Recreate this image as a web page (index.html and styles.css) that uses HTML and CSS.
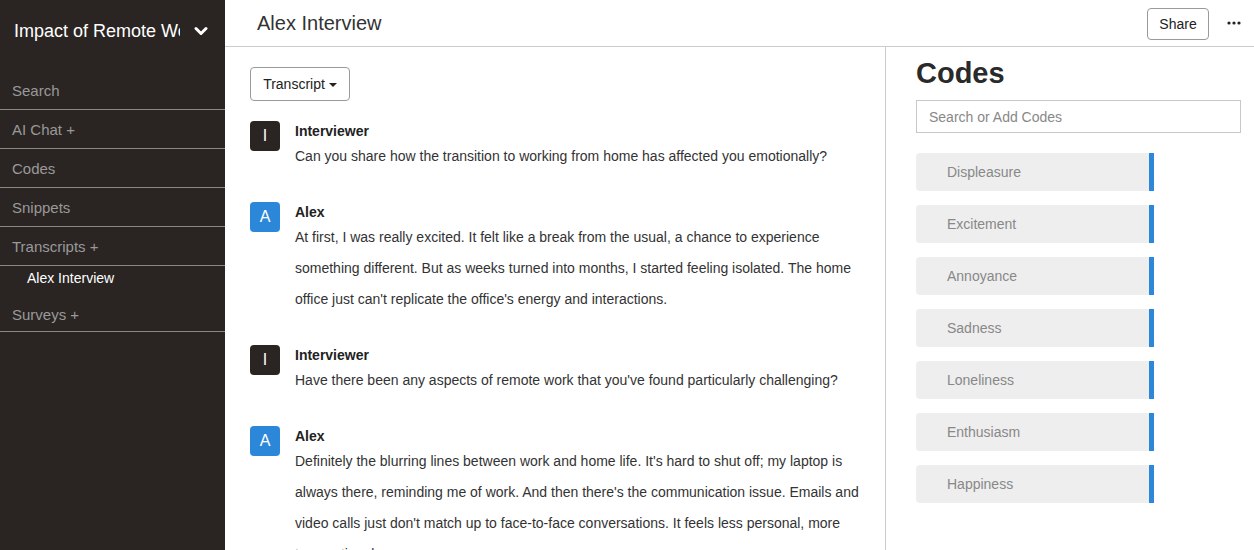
FILE: index.html
```html
<!DOCTYPE html>
<html>
<head>
<meta charset="utf-8">
<link rel="stylesheet" href="styles.css">
</head>
<body>
<div class="app">
  <aside class="sidebar">
    <div class="project">
      <span class="project-name">Impact of Remote Work</span>
      <svg class="chev" width="14" height="10" viewBox="0 0 14 10"><polyline points="2,2.5 7,7.5 12,2.5" fill="none" stroke="#fff" stroke-width="3" stroke-linecap="round" stroke-linejoin="round"/></svg>
    </div>
    <nav class="nav">
      <div class="nav-item">Search</div>
      <div class="nav-item">AI Chat +</div>
      <div class="nav-item">Codes</div>
      <div class="nav-item">Snippets</div>
      <div class="nav-item">Transcripts +</div>
      <div class="nav-sub">Alex Interview</div>
      <div class="nav-item after-sub">Surveys +</div>
    </nav>
  </aside>
  <div class="main">
    <header class="topbar">
      <h1 class="title">Alex Interview</h1>
      <div class="actions">
        <button class="btn share">Share</button>
        <svg class="dots" width="14" height="4" viewBox="0 0 14 4"><circle cx="2" cy="2" r="1.6" fill="#222"/><circle cx="7" cy="2" r="1.6" fill="#222"/><circle cx="12" cy="2" r="1.6" fill="#222"/></svg>
      </div>
    </header>
    <div class="body">
      <section class="transcript">
        <button class="btn dropdown">Transcript <span class="caret"></span></button>
        <div class="msg">
          <div class="avatar dark">I</div>
          <div class="msg-body">
            <div class="name">Interviewer</div>
            <p class="text">Can you share how the transition to working from home has affected you emotionally?</p>
          </div>
        </div>
        <div class="msg">
          <div class="avatar blue">A</div>
          <div class="msg-body">
            <div class="name">Alex</div>
            <p class="text">At first, I was really excited. It felt like a break from the usual, a chance to experience something different. But as weeks turned into months, I started feeling isolated. The home office just can't replicate the office's energy and interactions.</p>
          </div>
        </div>
        <div class="msg">
          <div class="avatar dark">I</div>
          <div class="msg-body">
            <div class="name">Interviewer</div>
            <p class="text">Have there been any aspects of remote work that you've found particularly challenging?</p>
          </div>
        </div>
        <div class="msg">
          <div class="avatar blue">A</div>
          <div class="msg-body">
            <div class="name">Alex</div>
            <p class="text">Definitely the blurring lines between work and home life. It's hard to shut off; my laptop is always there, reminding me of work. And then there's the communication issue. Emails and video calls just don't match up to face-to-face conversations. It feels less personal, more transactional.</p>
          </div>
        </div>
      </section>
      <section class="codes">
        <h2 class="codes-title">Codes</h2>
        <input class="code-search" type="text" placeholder="Search or Add Codes">
        <div class="code-list">
          <div class="code">Displeasure</div>
          <div class="code">Excitement</div>
          <div class="code">Annoyance</div>
          <div class="code">Sadness</div>
          <div class="code">Loneliness</div>
          <div class="code">Enthusiasm</div>
          <div class="code">Happiness</div>
        </div>
      </section>
    </div>
  </div>
</div>
</body>
</html>
```

FILE: styles.css
```css
* { box-sizing: border-box; }
html, body { margin: 0; padding: 0; height: 100%; overflow: hidden; }
body { font-family: "Liberation Sans", Arial, Helvetica, sans-serif; color: #333; background: #fff; }
.app { display: flex; height: 550px; }

.sidebar { width: 225px; flex: none; background: #2a2523; color: #999; }
.project { display: flex; align-items: center; height: 62px; padding: 0 0 0 14px; }
.project-name { color: #fff; font-size: 18px; width: 166px; overflow: hidden; white-space: nowrap; text-overflow: clip; }
.chev { margin-left: 14px; }
.nav { display: flex; flex-direction: column; padding-top: 9px; }
.nav-item { height: 39px; padding: 11px 12px 0; font-size: 15px; color: #999; border-bottom: 1px solid #8a8785; }
.nav-sub { height: 27px; padding: 4px 27px 0; font-size: 14px; color: #fff; }
.nav-item.after-sub { padding-top: 13px; }

.main { flex: 1; display: flex; flex-direction: column; min-width: 0; }
.topbar { height: 47px; flex: none; display: flex; align-items: center; justify-content: space-between; border-bottom: 1px solid #ccc; padding: 0 13px 0 32px; }
.title { margin: 1px 0 0; font-size: 20px; font-weight: normal; color: #333; }
.actions { display: flex; align-items: center; gap: 18px; }
.btn { font-family: inherit; font-size: 14px; color: #222; background: #fff; border: 1px solid #999; border-radius: 4px; }
.share { height: 32px; width: 62px; padding: 0; margin-top: 1px; }
.dots { display: block; }

.body { flex: 1; display: flex; min-height: 0; }
.transcript { width: 661px; flex: none; border-right: 1px solid #ccc; padding: 20px 10px 0 25px; }
.dropdown { height: 34px; width: 100px; padding: 0; display: flex; align-items: center; justify-content: center; gap: 4px; margin-bottom: 20px; }
.caret { width: 0; height: 0; border-left: 4px solid transparent; border-right: 4px solid transparent; border-top: 4px solid #222; margin-top: 1px; }

.msg { display: flex; gap: 15px; margin-bottom: 30px; }
.avatar { width: 30px; height: 30px; flex: none; border-radius: 4px; color: #fff; font-size: 16px; display: flex; align-items: center; justify-content: center; }
.avatar.dark { background: #2a2523; }
.avatar.blue { background: #2d87d9; }
.msg-body { flex: 1; }
.name { font-weight: bold; font-size: 14px; line-height: 20px; color: #222; }
.text { margin: 0; font-size: 14px; line-height: 31px; color: #333; }

.codes { flex: 1; padding: 0 13px 0 30px; }
.codes-title { margin: 9px 0 0; font-size: 29px; font-weight: bold; color: #2a2a2a; line-height: 34px; }
.code-search { display: block; width: 325px; height: 33px; margin-top: 10px; border: 1px solid #c8c8c8; padding: 0 12px; font-family: inherit; font-size: 14px; color: #333; }
.code-search::placeholder { color: #888; }
.code-list { margin-top: 20px; display: flex; flex-direction: column; gap: 14px; }
.code { width: 238px; height: 38px; background: #eee; border-radius: 4px 0 0 4px; border-right: 5px solid #2d87d9; color: #888; font-size: 14px; display: flex; align-items: center; padding-left: 31px; }
```
